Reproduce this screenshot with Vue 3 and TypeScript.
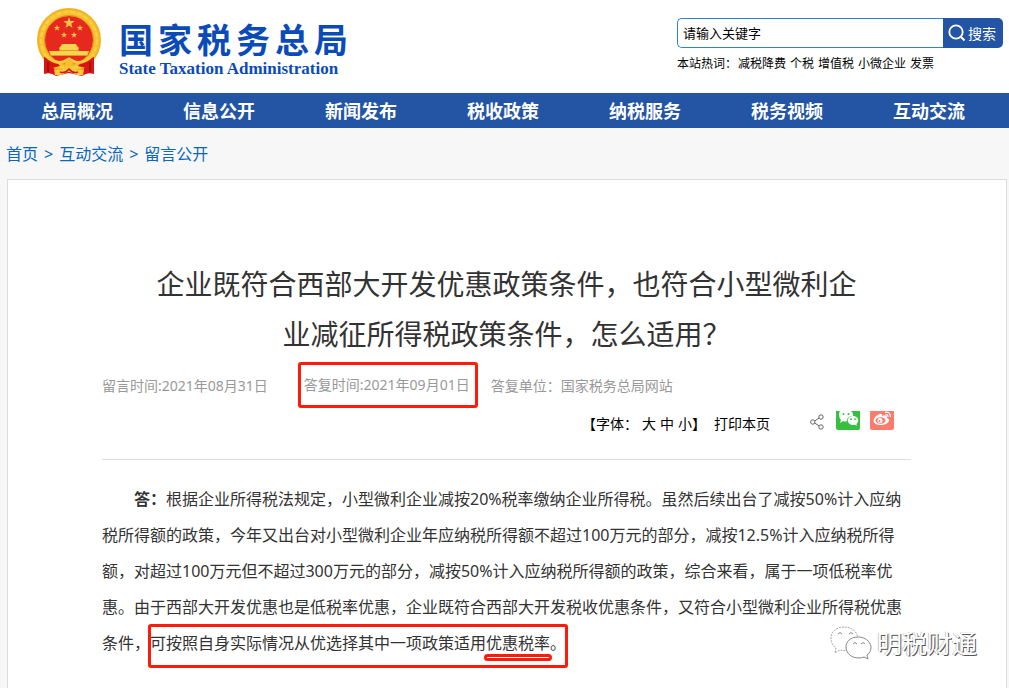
<script setup lang="ts">
import { ref } from 'vue'

const keyword = ref<string>('请输入关键字')
const navItems: string[] = ['总局概况', '信息公开', '新闻发布', '税收政策', '纳税服务', '税务视频', '互动交流']
const hotWords: string[] = ['减税降费', '个税', '增值税', '小微企业', '发票']
const crumbs: string[] = ['首页', '互动交流', '留言公开']
const fontSizes: string[] = ['大', '中', '小']
const smallStars: number[][] = [[20, 20], [43, 20], [27, 27], [37, 27]]
</script>

<template>
  <div class="page">
    <header class="header">
      <a class="brand" href="#">
        <svg class="emblem" viewBox="0 0 64 70" aria-hidden="true">
          <path d="M9 46 L55 46 L57 66 Q50 64 45 68 L32 65 L19 68 Q14 64 7 66 Z" fill="#d81414" />
          <circle cx="32" cy="32" r="28" fill="#e6281e" stroke="#f7c02c" stroke-width="8" />
          <circle cx="32" cy="32" r="31" fill="none" stroke="#eeab25" stroke-width="1" />
          <circle cx="32" cy="32" r="28" fill="none" stroke="#fbd04c" stroke-width="2" stroke-dasharray="5 2" />
          <circle cx="32" cy="32" r="24.500" fill="none" stroke="#dd9320" stroke-width="1" />
          <path d="M0 -6 L1.4 -1.9 L5.7 -1.9 L2.3 .7 L3.5 4.9 L0 2.4 L-3.5 4.9 L-2.3 .7 L-5.7 -1.9 L-1.4 -1.9 Z" transform="translate(32 15)" fill="#f6c344" />
          <path v-for="(s, i) in smallStars" :key="i" d="M0 -6 L1.4 -1.9 L5.7 -1.9 L2.3 .7 L3.5 4.9 L0 2.4 L-3.5 4.9 L-2.3 .7 L-5.7 -1.9 L-1.4 -1.9 Z" :transform="`translate(${s[0]} ${s[1]}) scale(.55)`" fill="#f6c344" />
          <path d="M24 38 L25 36 L39 36 L40 38 L42 40 L41 42 L23 42 L22 40 Z M23 42 H41 V43 H52 L50 48 H14 L12 43 H23 Z" fill="#f8d34d" />
          <path d="M22 42.500 H42 M12 47.500 H52" stroke="#dd9b25" stroke-width="1" />
          <path d="M7 49 Q18 51 23 58 L15 60 L7 66 Z M57 49 Q46 51 41 58 L49 60 L57 66 Z" fill="#d81414" />
          <path d="M9 48 Q17 56 26 54 L32 51 L38 54 Q47 56 55 48" fill="none" stroke="#f8c93d" stroke-width="3" />
          <path d="M17 61 Q26 64 32 57 Q38 64 47 61 L46 67 Q38 68 32 63 Q26 68 18 67 Z" fill="#f8c93d" />
          <circle cx="32" cy="55" r="4" fill="#f5bf32" />
          <path d="M23 64 Q28 66 32 61 Q36 66 41 64" fill="none" stroke="#d81414" stroke-width="1.500" />
          <path d="M11 54 L11 64 M53 54 L53 64" stroke="#a90f10" stroke-width="2" />
        </svg>
        <span class="brand-text">
          <span class="brand-cn">国家税务总局</span>
          <span class="brand-en">State Taxation Administration</span>
        </span>
      </a>
      <div class="search">
        <form class="search-form" @submit.prevent>
          <input v-model="keyword" class="search-input" type="text" aria-label="关键字" />
          <button class="search-button" type="submit">
            <svg class="search-icon" viewBox="0 0 18 18" aria-hidden="true">
              <circle cx="8" cy="8" r="6.7" fill="none" stroke="#fff" stroke-width="1.8" />
              <path d="M12.8 12.8 L16.5 16.5" stroke="#fff" stroke-width="2" />
            </svg>
            <span>搜索</span>
          </button>
        </form>
        <div class="hot">
          <span class="hot-label">本站热词：</span>
          <a v-for="w in hotWords" :key="w" href="#">{{ w }}</a>
        </div>
      </div>
    </header>

    <nav class="nav">
      <a v-for="n in navItems" :key="n" href="#">{{ n }}</a>
    </nav>

    <div class="crumbs">
      <template v-for="(c, i) in crumbs" :key="c">
        <span v-if="i > 0">&gt;</span>
        <a href="#">{{ c }}</a>
      </template>
    </div>

    <main class="card">
      <h1 class="title">企业既符合西部大开发优惠政策条件，也符合小型微利企业减征所得税政策条件，怎么适用？</h1>
      <div class="meta">
        <span>留言时间:2021年08月31日</span>
        <span class="meta-boxed">答复时间:2021年09月01日</span>
        <span>答复单位：国家税务总局网站</span>
      </div>
      <div class="tools">
        <div class="sizes">
          <span>【字体：</span>
          <button v-for="s in fontSizes" :key="s" type="button">{{ s }}</button>
          <span class="sizes-end">】</span>
        </div>
        <button class="print" type="button">打印本页</button>
        <div class="share">
          <svg class="share-icon" viewBox="0 0 14 16" aria-hidden="true">
            <g fill="none" stroke="#666" stroke-width="1">
              <circle cx="2.8" cy="8" r="2.2" />
              <circle cx="11" cy="3" r="2.2" />
              <circle cx="11" cy="13" r="2.2" />
              <path d="M4.7 6.9 L9 4.2 M4.7 9.1 L9 11.8" />
            </g>
          </svg>
          <a href="#" aria-label="微信">
            <svg class="social" viewBox="0 0 24 19" aria-hidden="true">
              <path d="M0 0 H24 V17 Q24 19 22 19 H2 Q0 19 0 17 Z" fill="#35c13f" />
              <path d="M3 3 Q3 -1 8 -1 H13 Q18 1 17 5 Q11 5 11 10 Q9 11 7 10 L4 12 L5 9 Q3 7 3 3 Z" fill="#fff" />
              <ellipse cx="17" cy="9.5" rx="5.2" ry="4.6" fill="#fff" />
              <path d="M18 13 L21 15 L20 12 Z" fill="#fff" />
              <g fill="#35c13f">
                <circle cx="7.5" cy="3" r="1" /><circle cx="12.5" cy="3" r="1" />
                <circle cx="15" cy="8.2" r=".9" /><circle cx="19" cy="8.2" r=".9" />
              </g>
            </svg>
          </a>
          <a href="#" aria-label="微博">
            <svg class="social" viewBox="0 0 24 19" aria-hidden="true">
              <path d="M0 0 H24 V17 Q24 19 22 19 H2 Q0 19 0 17 Z" fill="#fa7c6e" />
              <path d="M10 3 Q12 2 12 5 Q17 3 17 7 Q20 8 18.500 11 Q16 14 11 14 Q4 14 3.500 10 Q4 5 10 3 Z" fill="#fff" />
              <ellipse cx="10.500" cy="9.500" rx="5" ry="3.300" fill="#fa7c6e" />
              <circle cx="10" cy="9.600" r="2.500" fill="#fff" />
              <circle cx="9.500" cy="10" r="1" fill="#fa7c6e" />
              <path d="M15 1.500 Q20 0 20.500 6 M15.500 3.800 Q18 3.300 18 6" fill="none" stroke="#fff" stroke-width="1.200" />
            </svg>
          </a>
        </div>
      </div>
      <p class="answer"><b>答：</b>根据企业所得税法规定，小型微利企业减按20%税率缴纳企业所得税。虽然后续出台了减按50%计入应纳税所得额的政策，今年又出台对小型微利企业年应纳税所得额不超过100万元的部分，减按12.5%计入应纳税所得额，对超过100万元但不超过300万元的部分，减按50%计入应纳税所得额的政策，综合来看，属于一项低税率优惠。由于西部大开发优惠也是低税率优惠，企业既符合西部大开发税收优惠条件，又符合小型微利企业所得税优惠条件，<span class="boxed">可按照自身实际情况从优选择其中一项政策适用<span class="underlined">优惠税率</span>。</span></p>
      <div class="watermark">
        <svg class="watermark-icon" viewBox="0 0 42 36" aria-hidden="true">
          <g fill="#fff" stroke="#888" stroke-width="1">
            <path d="M14 2 C6 2 1 7 1 13 C1 18 3 21 6 23 L5 28 L10 25 Q13 26 17 25 C26 25 29 19 28 13 C27 6 21 2 14 2 Z" stroke="#aaa" stroke-dasharray="2 1" />
            <path d="M28 12 C20 12 16 17 16 22 C16 28 21 33 29 33 Q32 33 34 32 L38 34 L37 30 C40 28 41 25 41 22 C40 16 35 12 28 12 Z" />
            <path d="M8 9 Q10 6 12 9 M19 9 Q21 6 23 9 M23 19 Q25 16 27 19 M31 19 Q33 16 35 19" fill="none" />
          </g>
        </svg>
        <span>明税财通</span>
      </div>
    </main>
  </div>
</template>

<style>
body {
  margin: 0;
  background: #f7f7f7;
}
</style>

<style scoped>
.page {
  min-height: 100vh;
  display: flex;
  flex-direction: column;
  overflow: hidden;
  box-sizing: border-box;
  font-family: "Noto Sans", "Noto Sans CJK SC", sans-serif;
  text-spacing-trim: space-all;
  color: #333;
}
a {
  color: inherit;
  text-decoration: none;
}
button {
  padding: 0;
  border: 0;
  background: none;
  color: inherit;
  font: inherit;
}
.header {
  display: flex;
  justify-content: space-between;
  align-items: flex-start;
  height: 93px;
  padding: 0 6px 0 37px;
  background: #fff;
}
.brand {
  display: flex;
  gap: 18px;
  padding-top: 8px;
  color: #0b4bb8;
}
.emblem {
  width: 64px;
  height: 70px;
}
.brand-text {
  display: flex;
  flex-direction: column;
  padding-top: 12px;
  white-space: nowrap;
}
.brand-cn {
  font-size: 34px;
  line-height: 40px;
  font-weight: 700;
  letter-spacing: 5px;
}
.brand-en {
  font: 700 17px/18px "Liberation Serif", serif;
}
.search {
  width: 326px;
  padding-top: 18px;
}
.search-form {
  display: flex;
  height: 30px;
}
.search-input {
  flex: 1;
  min-width: 0;
  box-sizing: border-box;
  padding: 0 5px 2px;
  border: 1px solid #2a86d1;
  border-right: 0;
  border-radius: 5px 0 0 5px;
  background: #fff;
  color: #000;
  font: 13px "Noto Sans", "Noto Sans CJK SC", sans-serif;
}
.search-button {
  display: flex;
  align-items: center;
  justify-content: center;
  gap: 2px;
  width: 60px;
  padding-right: 2px;
  border-radius: 0 5px 5px 0;
  background: #2355a4;
  color: #fff;
  font-size: 14px;
}
.search-icon {
  width: 18px;
  height: 18px;
}
.hot {
  display: flex;
  gap: 4px;
  padding-top: 7px;
  font-size: 12px;
  line-height: 18px;
  color: #000;
  white-space: nowrap;
}
.hot-label {
  margin-right: -3px;
}
.nav {
  display: grid;
  grid-template-columns: repeat(7, 1fr);
  padding: 2px 9px 0 6px;
  background: #2355a4;
  color: #fff;
  font-size: 18px;
  font-weight: 700;
  line-height: 33px;
  text-align: center;
}
.crumbs {
  display: flex;
  gap: 6px;
  padding: 14px 6px 13px;
  font-size: 16px;
  line-height: 24px;
  color: #0b66bd;
}
.card {
  position: relative;
  flex: 1;
  margin: 0 2px 0 7px;
  padding: 79px 95px 24px 94px;
  border: 1px solid #ddd;
  border-bottom: 0;
  background: #fff;
}
.title {
  margin: 0;
  padding: 0 50px;
  font-size: 28px;
  font-weight: 400;
  line-height: 50px;
  text-align: center;
}
.meta {
  display: flex;
  align-items: center;
  height: 46px;
  margin-top: 3px;
  font-size: 14px;
  color: #999;
  white-space: nowrap;
}
.meta-boxed {
  margin: 0 13px 0 30px;
  padding: 0 5px 0 3px;
  border: 3px solid #ff1a0a;
  border-radius: 3px;
  line-height: 40px;
}
.tools {
  display: flex;
  justify-content: flex-end;
  padding: 1px 17px 20px 0;
  border-bottom: 1px solid #ddd;
  font-size: 14px;
  line-height: 30px;
  color: #000;
}
.sizes {
  display: flex;
  gap: 4px;
}
.sizes-end {
  margin-left: -4px;
}
.print {
  margin: 0 40px 0 8px;
}
.share {
  display: flex;
  gap: 10px;
  padding-top: 2px;
}
.share-icon {
  width: 14px;
  height: 16px;
  padding: 3px 2px 0 0;
}
.social {
  display: block;
  width: 24px;
  height: 19px;
}
.answer {
  margin: 21px 0 0;
  font-size: 16px;
  line-height: 36px;
  text-indent: 32px;
}
.boxed {
  display: inline-block;
  position: relative;
  text-indent: 0;
  white-space: nowrap;
}
.boxed::after {
  content: "";
  position: absolute;
  inset: -1px -2px -7px -2px;
  border: 3px solid #ff1a0a;
  border-radius: 3px;
}
.underlined {
  position: relative;
}
.underlined::after {
  content: "";
  position: absolute;
  left: -2px;
  right: -2px;
  bottom: -7px;
  height: 1px;
  border: 3px solid #ff1a0a;
  border-radius: 4px;
  background: #fff;
}
.watermark {
  position: absolute;
  right: 29px;
  top: 445px;
  display: flex;
  align-items: center;
  gap: 5px;
  color: #fff;
  font-size: 25px;
  line-height: 36px;
  text-shadow: 1px 1px 0 #555, -1px 0 0 #ccc;
}
.watermark-icon {
  width: 42px;
  height: 36px;
}
</style>
